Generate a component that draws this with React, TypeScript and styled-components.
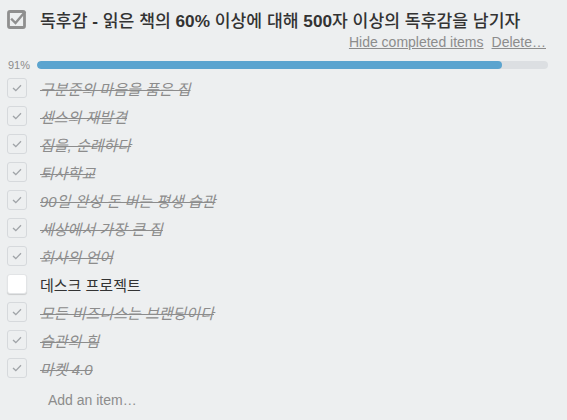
import * as React from 'react';
import styled, { createGlobalStyle } from 'styled-components';

const GlobalStyle = createGlobalStyle`
  html, body {
    margin: 0;
    padding: 0;
    background: #edeff0;
  }
  body {
    font-family: "Liberation Sans", "Noto Sans CJK KR", sans-serif;
  }
`;

interface Item {
  name: string;
  done: boolean;
}

const items: Item[] = [
  { name: '구분준의 마음을 품은 집', done: true },
  { name: '센스의 재발견', done: true },
  { name: '집을, 순례하다', done: true },
  { name: '퇴사학교', done: true },
  { name: '90일 완성 돈 버는 평생 습관', done: true },
  { name: '세상에서 가장 큰 집', done: true },
  { name: '회사의 언어', done: true },
  { name: '데스크 프로젝트', done: false },
  { name: '모든 비즈니스는 브랜딩이다', done: true },
  { name: '습관의 힘', done: true },
  { name: '마켓 4.0', done: true },
];

const Checklist = styled.div`
  display: flex;
  flex-direction: column;
  padding: 9px 19px 0 7px;
`;

const Header = styled.div`
  display: flex;
  align-items: flex-start;
  gap: 13px;
`;

const TitleText = styled.h3`
  margin: 0;
  font-size: 17.2px;
  line-height: 24px;
  font-weight: 500;
  color: #333333;
`;

const Strong = styled.b`
  font-weight: 700;
`;

const Options = styled.div`
  display: flex;
  justify-content: flex-end;
  gap: 8px;
  padding-right: 2px;
`;

const OptionLink = styled.a`
  font-size: 14px;
  line-height: 18px;
  color: #8c8c8c;
  text-decoration: underline;
  cursor: pointer;
`;

const ProgressRow = styled.div`
  display: flex;
  align-items: center;
  gap: 7px;
  margin-top: 8px;
  padding-left: 1px;
`;

const Percent = styled.span`
  font-size: 11px;
  color: #8c8c8c;
  width: 22px;
`;

const Track = styled.div`
  flex: 1;
  height: 8px;
  border-radius: 4px;
  background: #dcdfe2;
  overflow: hidden;
`;

const Fill = styled.div`
  height: 100%;
  border-radius: 4px;
  background: #5ba4cf;
`;

const List = styled.div`
  display: flex;
  flex-direction: column;
  margin-top: 3px;
`;

const Row = styled.div`
  display: flex;
  align-items: center;
  height: 28px;
  gap: 13px;
`;

const Box = styled.div<{ $done: boolean }>`
  width: 18px;
  height: 18px;
  flex-shrink: 0;
  display: flex;
  align-items: center;
  justify-content: center;
  border-radius: 3px;
  background: ${({ $done }) => ($done ? 'transparent' : '#ffffff')};
  border: 1px solid ${({ $done }) => ($done ? '#d6d9dc' : '#e2e4e6')};
  box-shadow: ${({ $done }) => ($done ? 'none' : '0 1px 1px rgba(0,0,0,0.15)')};
`;

const ItemText = styled.span<{ $done: boolean }>`
  font-size: 15px;
  color: ${({ $done }) => ($done ? '#8c8c8c' : '#333333')};
  font-style: ${({ $done }) => ($done ? 'italic' : 'normal')};
  text-decoration: ${({ $done }) => ($done ? 'line-through' : 'none')};
`;

const AddItem = styled.div`
  font-size: 14px;
  color: #8c8c8c;
  padding: 10px 0 0 41px;
`;

function HeaderIcon() {
  return (
    <svg width="20" height="20" viewBox="0 0 20 20" style={{ marginTop: 1 }}>
      <rect x="1.5" y="1.5" width="16" height="16" rx="1.5" fill="none" stroke="#8f8f8f" strokeWidth="2.8" />
      <path d="M5 9.5 L8.5 13 L17.5 2.5" fill="none" stroke="#8f8f8f" strokeWidth="2.4" strokeLinecap="square" />
    </svg>
  );
}

function Check() {
  return (
    <svg width="10" height="8" viewBox="0 0 10 8">
      <path d="M1 4 L3.8 6.6 L9 1.2" fill="none" stroke="#a0a4a8" strokeWidth="1.3" />
    </svg>
  );
}

export default function App() {
  const done = 91;
  return (
    <>
      <GlobalStyle />
      <Checklist>
        <Header>
          <HeaderIcon />
          <TitleText>
            독후감 <Strong>-</Strong> 읽은 책의 <Strong>60%</Strong> 이상에 대해 <Strong>500</Strong>자 이상의 독후감을 남기자
          </TitleText>
        </Header>
        <Options>
          <OptionLink>Hide completed items</OptionLink>
          <OptionLink>Delete…</OptionLink>
        </Options>
        <ProgressRow>
          <Percent>{done}%</Percent>
          <Track>
            <Fill style={{ width: `${done}%` }} />
          </Track>
        </ProgressRow>
        <List>
          {items.map((item) => (
            <Row key={item.name}>
              <Box $done={item.done}>{item.done ? <Check /> : null}</Box>
              <ItemText $done={item.done}>{item.name}</ItemText>
            </Row>
          ))}
        </List>
        <AddItem>Add an item…</AddItem>
      </Checklist>
    </>
  );
}
